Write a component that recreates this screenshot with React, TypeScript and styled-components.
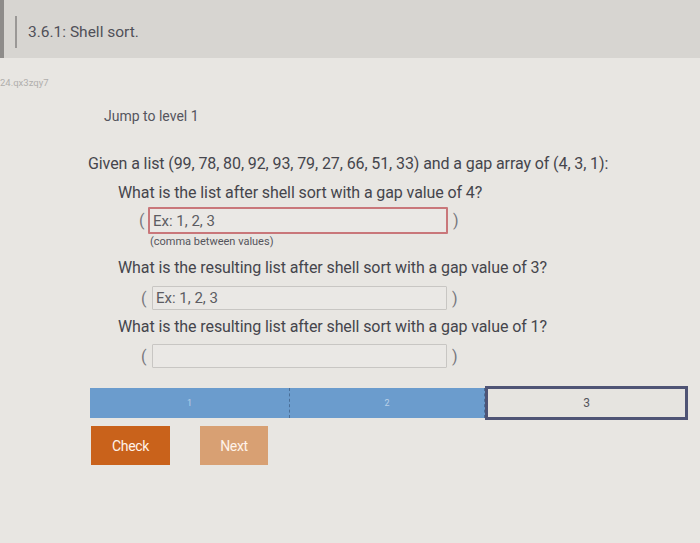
import React from "react";
import styled, { createGlobalStyle } from "styled-components";

const Global = createGlobalStyle`
  html, body { margin: 0; padding: 0; }
  body {
    width: 700px; height: 543px; overflow: hidden;
    background: #e8e6e2;
    font-family: Roboto, "Liberation Sans", Arial, sans-serif;
    color: #45454c;
  }
`;

const Page = styled.div`
  width: 700px;
  height: 543px;
  display: flex;
  flex-direction: column;
`;

const Header = styled.div`
  height: 58px;
  background: #d7d5d1;
  display: flex;
  align-items: center;
  padding-left: 11px;
  border-left: 4px solid #8e8c8a;
`;

const Divider = styled.div`
  width: 2px;
  height: 32px;
  background: #9a9896;
  margin-right: 11px;
  margin-top: 6px;
`;

const Title = styled.h1`
  margin: 0;
  font-size: 15.5px;
  font-weight: 400;
  color: #505058;
  padding-top: 6px;
`;

const Code = styled.div`
  font-size: 9.5px;
  color: #b0aeac;
  margin-top: 19px;
  height: 12px;
`;

const Content = styled.div`
  display: flex;
  flex-direction: column;
  padding-left: 88px;
`;

const Jump = styled.div`
  font-size: 14px;
  color: #55555e;
  margin-left: 16px;
  margin-top: 19px;
`;

const Given = styled.div`
  font-size: 16px;
  margin-top: 30px;
  letter-spacing: -0.1px;
`;

const Question = styled.div<{ $top: number }>`
  font-size: 16px;
  margin-left: 30px;
  margin-top: ${(p) => p.$top}px;
  letter-spacing: -0.1px;
`;

const AnswerRow = styled.div<{ $left: number; $top: number }>`
  display: flex;
  align-items: center;
  margin-left: ${(p) => p.$left}px;
  margin-top: ${(p) => p.$top}px;
  font-size: 16px;
`;

const Paren = styled.span<{ $w?: number }>`
  font-size: 16px;
  color: #77777e;
  width: ${(p) => p.$w ?? 8}px;
`;

const Input = styled.input<{ $w: number; $h: number; $err?: boolean }>`
  width: ${(p) => p.$w}px;
  height: ${(p) => p.$h}px;
  box-sizing: border-box;
  margin: 0 5px 0 0;
  padding: 0 3px;
  font-family: Roboto, "Liberation Sans", Arial, sans-serif;
  font-size: 15px;
  color: #55555c;
  background: #eae8e5;
  border: ${(p) => (p.$err ? "2px solid #c9777a" : "1px solid #c8c6c3")};
  border-radius: 1px;
  outline: none;
  &::placeholder { color: #5c5c62; }
`;

const Hint = styled.div`
  font-size: 11px;
  color: #55555c;
  margin-left: 62px;
  margin-top: 1px;
`;

const Progress = styled.div`
  display: flex;
  width: 598px;
  height: 32px;
  margin-left: 2px;
  margin-top: 19px;
  align-items: center;
`;

const Segment = styled.div<{ $done?: boolean; $w: number }>`
  width: ${(p) => p.$w}px;
  box-sizing: border-box;
  display: flex;
  align-items: center;
  justify-content: center;
  font-size: ${(p) => (p.$done ? 9 : 12)}px;
  color: ${(p) => (p.$done ? "#b9d0e8" : "#55555c")};
  background: ${(p) => (p.$done ? "#6b9ccd" : "#e6e4e0")};
  border: ${(p) => (p.$done ? "none" : "3px solid #4f5475")};
  border-right: ${(p) => (p.$done ? "1px dashed #4a6f98" : "3px solid #4f5475")};
  height: ${(p) => (p.$done ? 30 : 34)}px;
`;

const Buttons = styled.div`
  display: flex;
  gap: 30px;
  margin-left: 3px;
  margin-top: 7px;
`;

const Btn = styled.button<{ $bg: string; $w: number }>`
  width: ${(p) => p.$w}px;
  height: 39px;
  border: none;
  background: ${(p) => p.$bg};
  color: #fff3ea;
  font-family: Roboto, "Liberation Sans", Arial, sans-serif;
  font-size: 14px;
  letter-spacing: -0.3px;
`;

export default function App() {
  return (
    <>
      <Global />
      <Page>
        <Header>
          <Divider />
          <Title>3.6.1: Shell sort.</Title>
        </Header>
        <Code>24.qx3zqy7</Code>
        <Content>
          <Jump>Jump to level 1</Jump>
          <Given>Given a list (99, 78, 80, 92, 93, 79, 27, 66, 51, 33) and a gap array of (4, 3, 1):</Given>
          <Question $top={10}>What is the list after shell sort with a gap value of 4?</Question>
          <AnswerRow $left={51} $top={5}>
            <Paren $w={9}>(</Paren>
            <Input $w={300} $h={27} $err placeholder="Ex: 1, 2, 3" />
            <Paren>)</Paren>
          </AnswerRow>
          <Hint>(comma between values)</Hint>
          <Question $top={10}>What is the resulting list after shell sort with a gap value of 3?</Question>
          <AnswerRow $left={53} $top={9}>
            <Paren $w={11}>(</Paren>
            <Input $w={295} $h={24} placeholder="Ex: 1, 2, 3" />
            <Paren>)</Paren>
          </AnswerRow>
          <Question $top={7}>What is the resulting list after shell sort with a gap value of 1?</Question>
          <AnswerRow $left={53} $top={8}>
            <Paren $w={11}>(</Paren>
            <Input $w={295} $h={24} />
            <Paren>)</Paren>
          </AnswerRow>
          <Progress>
            <Segment $done $w={200}>1</Segment>
            <Segment $done $w={195}>2</Segment>
            <Segment $w={203}>3</Segment>
          </Progress>
          <Buttons>
            <Btn $bg="#c9621b" $w={79}>Check</Btn>
            <Btn $bg="#d8a073" $w={68}>Next</Btn>
          </Buttons>
        </Content>
      </Page>
    </>
  );
}
